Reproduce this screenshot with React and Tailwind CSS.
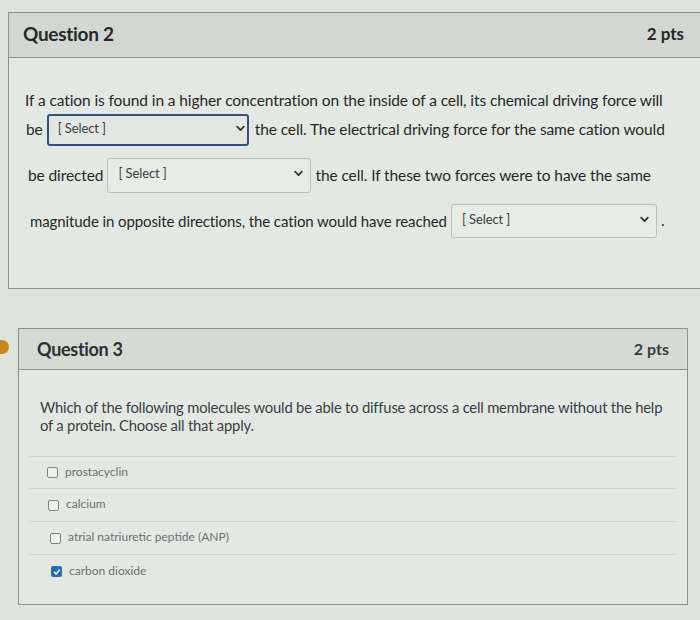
import React from 'react';

const Chevron = ({ className = '' }) => (
  <svg viewBox="0 0 10 8" className={`w-[9px] h-[7px] ${className}`} fill="none">
    <path d="M1.2 1.8 L5 5.8 L8.8 1.8" stroke="#2f3437" strokeWidth="2" strokeLinecap="round" strokeLinejoin="round" />
  </svg>
);

function Dropdown({ width, height, focused }) {
  return (
    <div
      className={`flex items-center justify-between rounded-[3px] ${width} ${height} ${
        focused
          ? 'pl-[9px] pr-[2px] border-2 border-[#34507a] bg-[#e2e7e3]'
          : 'pl-[10px] pr-[7px] border border-[#b9bfba] bg-[#e6ebe6]'
      }`}
    >
      <span className="text-[13px] text-[#3a3f42] -mt-[3px]">[ Select ]</span>
      <Chevron className="-mt-[4px]" />
    </div>
  );
}

function Checkbox({ checked }) {
  if (checked) {
    return (
      <span className="flex items-center justify-center w-[11px] h-[11px] rounded-[2px] bg-[#2a6cb3]">
        <svg viewBox="0 0 10 10" className="w-[8px] h-[8px]" fill="none">
          <path d="M1.8 5.2 L4 7.4 L8.2 2.6" stroke="white" strokeWidth="1.8" strokeLinecap="round" strokeLinejoin="round" />
        </svg>
      </span>
    );
  }
  return <span className="w-[11px] h-[11px] rounded-[2px] border border-[#7d8380] bg-[#eef1ee]" />;
}

const answers = [
  { label: 'prostacyclin', checked: false, pad: 'pl-[18px]' },
  { label: 'calcium', checked: false, pad: 'pl-[19px]' },
  { label: 'atrial natriuretic peptide (ANP)', checked: false, pad: 'pl-[21px]' },
  { label: 'carbon dioxide', checked: true, pad: 'pl-[22px]' },
];

export default function App() {
  return (
    <div
      className="w-[700px] h-[620px] overflow-hidden bg-[#dde2dc] text-[#262828]"
      style={{ fontFamily: 'Lato, "Open Sans", sans-serif' }}
    >
      {/* Question 2 */}
      <div className="mt-[12px] ml-[8px] border-l border-t border-b border-[#8d928e] bg-[#e3e8e3]">
        <div className="flex items-center justify-between h-[45px] pl-[14px] pr-[16px] bg-[#d3d7d2] border-b border-[#8d928e]">
          <span className="text-[19px] font-bold tracking-[-0.3px] -mt-[2px]">Question 2</span>
          <span className="text-[17px] font-bold -mt-[2px]">2 pts</span>
        </div>
        <div className="pt-[33px] pb-[50px] text-[15.5px] tracking-[-0.1px]">
          <div className="h-[20px] flex items-center pl-[16px]">
            If a cation is found in a higher concentration on the inside of a cell, its chemical driving force will
          </div>
          <div className="mt-[3px] flex items-center gap-[4px] pl-[17px]">
            <span>be</span>
            <Dropdown width="w-[202px]" height="h-[32px]" focused />
            <span className="ml-[2px]">the cell. The electrical driving force for the same cation would</span>
          </div>
          <div className="mt-[12px] flex items-center gap-[4px] pl-[19px]">
            <span>be directed</span>
            <Dropdown width="w-[204px]" height="h-[35px]" />
            <span>the cell. If these two forces were to have the same</span>
          </div>
          <div className="mt-[11px] flex items-center gap-[4px] pl-[21px]">
            <span className="text-[15px]">magnitude in opposite directions, the cation would have reached</span>
            <Dropdown width="w-[206px]" height="h-[34px]" />
            <span>.</span>
          </div>
        </div>
      </div>

      {/* Question 3 */}
      <div className="relative mt-[39px]">
        <span className="absolute left-0 top-[12px] w-[9px] h-[14px] rounded-r-full bg-[#c48a22]" />
        <div className="ml-[18px] mr-[12px] border border-[#8d928e] bg-[#e3e8e3]">
          <div className="flex items-center justify-between h-[41px] pl-[18px] pr-[18px] bg-[#d6dad5] border-b border-[#8d928e]">
            <span className="text-[18px] font-bold tracking-[-0.3px] text-[#2d3033]">Question 3</span>
            <span className="text-[16px] font-bold text-[#3a3d40]">2 pts</span>
          </div>
          <div className="pt-[28px] pl-[21px] pr-[10px] text-[14.8px] leading-[18px] text-[#3a3f44] tracking-[-0.2px]">
            Which of the following molecules would be able to diffuse across a cell membrane without the help
            <br />
            of a protein. Choose all that apply.
          </div>
          <div className="mt-[22px] mr-[10px] ml-[10px] pb-[16px]">
            {answers.map((a, i) => (
              <div
                key={a.label}
                className={`h-[33px] flex items-center gap-[7px] ${a.pad} ${
                  i === 0 ? 'border-t' : ''
                } ${i < answers.length - 1 ? 'border-b' : ''} border-[#d2d7d2]`}
              >
                <Checkbox checked={a.checked} />
                <span className="text-[12px] text-[#6b7171] -mt-[2px]">{a.label}</span>
              </div>
            ))}
          </div>
        </div>
      </div>
    </div>
  );
}
